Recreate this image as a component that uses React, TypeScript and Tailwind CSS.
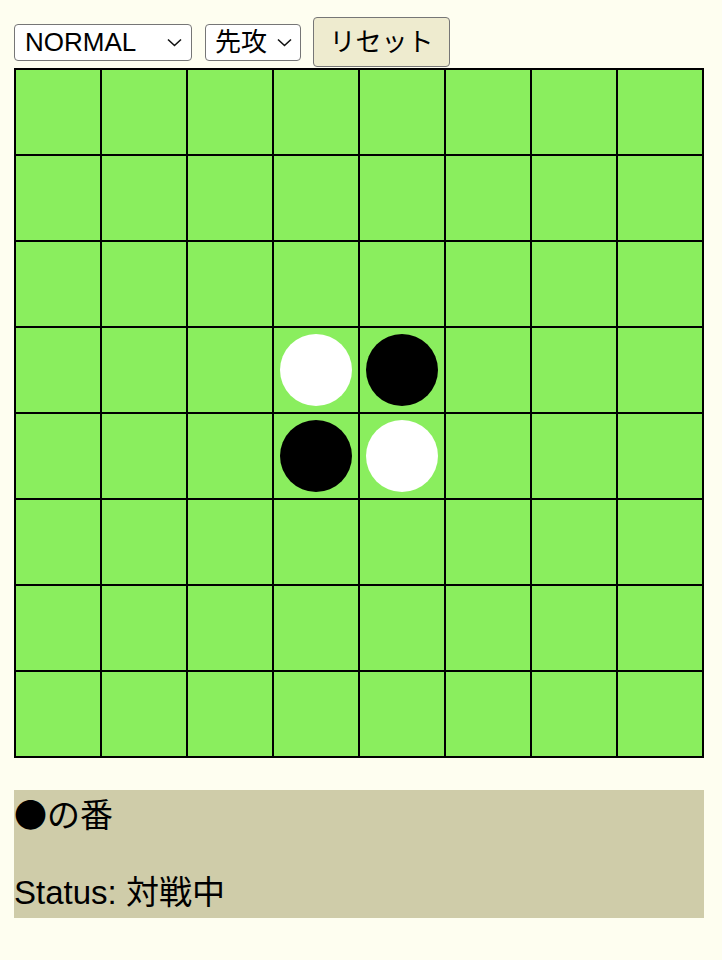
import { useState } from 'react';

type Cell = 0 | 1 | 2; // 0 empty, 1 black, 2 white

const initialBoard = (): Cell[] => {
  const b: Cell[] = Array(64).fill(0);
  b[3 * 8 + 3] = 2;
  b[3 * 8 + 4] = 1;
  b[4 * 8 + 3] = 1;
  b[4 * 8 + 4] = 2;
  return b;
};

function Chevron() {
  return (
    <svg width="15" height="9" viewBox="0 0 15 9" className="shrink-0">
      <path d="M1 1.5 L7.5 7.5 L14 1.5" fill="none" stroke="#111" strokeWidth="1.6" />
    </svg>
  );
}

export default function App() {
  const [board, setBoard] = useState<Cell[]>(initialBoard);
  const [mode, setMode] = useState('NORMAL');
  const [order, setOrder] = useState('先攻');

  const font = { fontFamily: '"Liberation Sans", "Noto Sans CJK JP", sans-serif' };
  const cjk = { fontFamily: '"Noto Sans CJK JP", sans-serif' };

  return (
    <div className="min-h-[960px] bg-[#fefef0] pl-[14px] pt-[17px] text-black" style={font}>
      {/* controls */}
      <div className="flex items-center h-[50px]">
        <label className="relative flex items-center w-[178px] h-[37px] border border-[#767676] rounded-[4px] bg-white">
          <select
            value={mode}
            onChange={(e) => setMode(e.target.value)}
            className="appearance-none w-full h-full bg-transparent pl-[10px] text-[26px] leading-none outline-none"
          >
            <option>NORMAL</option>
            <option>EASY</option>
            <option>HARD</option>
          </select>
          <span className="absolute right-[9px] pointer-events-none">
            <Chevron />
          </span>
        </label>
        <label className="relative flex items-center ml-[13px] w-[96px] h-[37px] border border-[#767676] rounded-[4px] bg-white">
          <select
            value={order}
            onChange={(e) => setOrder(e.target.value)}
            className="appearance-none w-full h-full bg-transparent pl-[9px] text-[26px] leading-none outline-none"
          >
            <option>先攻</option>
            <option>後攻</option>
          </select>
          <span className="absolute right-[8px] pointer-events-none">
            <Chevron />
          </span>
        </label>
        <button
          onClick={() => setBoard(initialBoard())}
          className="ml-[12px] w-[137px] h-[50px] border border-[#767676] rounded-[4px] bg-[#eeebcf] text-[26px] leading-none"
        >
          リセット
        </button>
      </div>

      {/* board */}
      <div className="grid grid-cols-8 w-[690px] border border-black bg-[#8aee5e] mt-[1px]">
        {board.map((c, i) => (
          <div key={i} className="w-[86px] h-[86px] border border-black flex items-center justify-center">
            {c === 1 && <div className="w-[72px] h-[72px] rounded-full bg-black" />}
            {c === 2 && <div className="w-[72px] h-[72px] rounded-full bg-white" />}
          </div>
        ))}
      </div>

      {/* status */}
      <div className="mt-[32px] w-[690px] h-[128px] bg-[#cfcca9] flex flex-col text-[33px]">
        <div className="leading-[46px]" style={cjk}>●の番</div>
        <div className="leading-[50px] mt-[32px]">Status: 対戦中</div>
      </div>
    </div>
  );
}
